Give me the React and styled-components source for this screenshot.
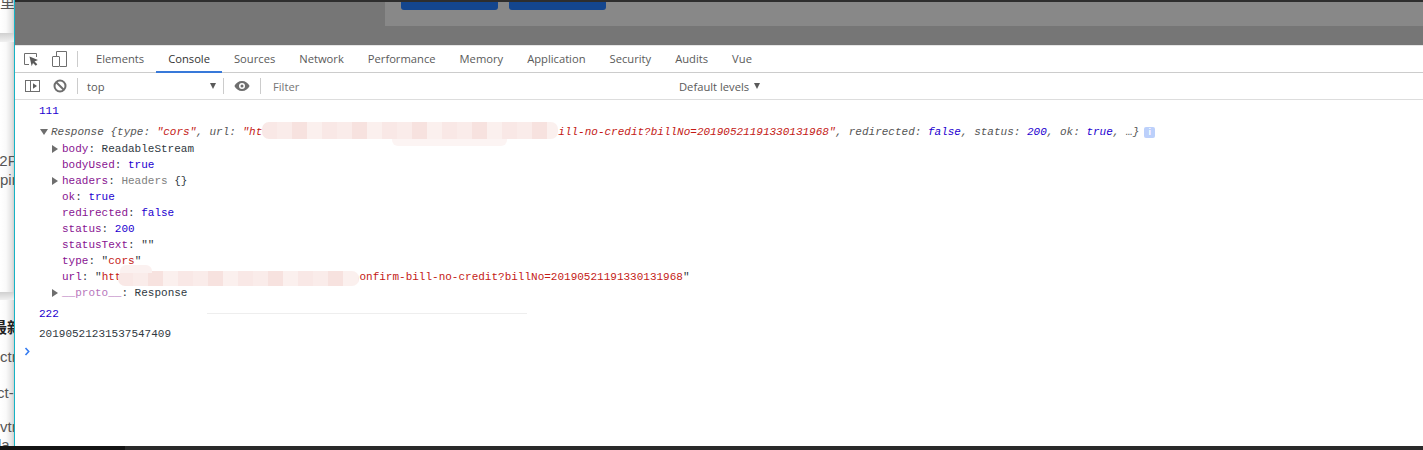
import React from 'react';
import styled, { createGlobalStyle } from 'styled-components';

const TABS = ['Elements', 'Console', 'Sources', 'Network', 'Performance', 'Memory', 'Application', 'Security', 'Audits', 'Vue'];

const App = () => (
  <Page>
    <GlobalStyle />
    <Backdrop>
      <BackdropText $top={-7} $left={0}>里.</BackdropText>
      <BackdropBand $top={33} $height={9} />
      <BackdropText $top={151} $left={-4}>l2P</BackdropText>
      <BackdropText $top={170} $left={0}>pir</BackdropText>
      <BackdropBand $top={292} $height={8} />
      <BackdropText $top={318} $left={-8} $bold>最新</BackdropText>
      <BackdropText $top={347} $left={0}>ctr</BackdropText>
      <BackdropText $top={383} $left={-3}>ct-</BackdropText>
      <BackdropText $top={417} $left={0}>vtr</BackdropText>
      <BackdropText $top={435} $left={-2}>la</BackdropText>
    </Backdrop>
    <Main>
      <Overlay>
        <OverlayCard>
          <BlueButton />
          <BlueButton />
        </OverlayCard>
      </Overlay>
      <TabBar>
        <IconButton>
          <svg width="20" height="18" viewBox="0 0 20 18" fill="none">
            <path d="M6 14.5H1.500V3.500H13.500V7" stroke="#6e6e6e" strokeWidth="1" />
            <path d="M6.500 6.500l8.500 3.500-3.500 1.400 2.800 2.800-1.500 1.500-2.800-2.800-1.300 3.300z" fill="#5a5a5a" />
          </svg>
        </IconButton>
        <IconButton>
          <svg width="18" height="18" viewBox="0 0 18 18" fill="none" stroke="#6e6e6e">
            <path d="M5.500 6V1.500H15.500V16.500H9" />
            <rect x="1.500" y="6.500" width="7" height="10" rx="0.500" />
          </svg>
        </IconButton>
        <Separator $left={7} $right={6} />
        {TABS.map((tab) => (
          <Tab key={tab} $active={tab === 'Console'}>{tab}</Tab>
        ))}
      </TabBar>
      <FilterBar>
        <IconButton $first>
          <svg width="16" height="14" viewBox="0 0 16 14" fill="none">
            <rect x="0.500" y="1.500" width="14" height="11" stroke="#6e6e6e" />
            <path d="M5.500 1.500V12.500" stroke="#6e6e6e" />
            <path d="M8 4.200l4 2.800-4 2.800z" fill="#5a5a5a" />
          </svg>
        </IconButton>
        <IconButton>
          <svg width="16" height="16" viewBox="0 0 16 16" fill="none" stroke="#6e6e6e" strokeWidth="2">
            <circle cx="8" cy="8" r="5.500" />
            <path d="M4 4l8 8" />
          </svg>
        </IconButton>
        <Separator $left={7} $right={9} />
        <ContextSelect>
          top
          <DownCaret />
        </ContextSelect>
        <Separator $left={7} $right={1} />
        <IconButton>
          <svg width="16" height="12" viewBox="0 0 16 12">
            <path fillRule="evenodd" fill="#6e6e6e" d="M8 1c3.400 0 6.200 2.100 7.600 5-1.400 2.900-4.200 5-7.600 5S1.800 8.900.4 6C1.800 3.100 4.600 1 8 1zm0 2a3 3 0 100 6 3 3 0 000-6zm0 1.500a1.500 1.500 0 110 3 1.500 1.500 0 010-3z" />
          </svg>
        </IconButton>
        <Separator $left={8} $right={12} />
        <FilterLabel>Filter</FilterLabel>
        <LevelSelect>
          Default levels
          <DownCaret />
        </LevelSelect>
      </FilterBar>
      <Console>
        <LogRow $color="#1c00cf">111</LogRow>
        <ObjectRow>
          <Arrow $open />
          <Preview>
            <span>Response {'{'}type: </span>
            <Str>"cors"</Str>, url: <Str>"ht</Str>
            <Blur $width={296} $top={-2} $height={17} $left={0} $tail />
            <Str>ill-no-credit?billNo=20190521191330131968"</Str>, redirected: <Kw>false</Kw>, status: <Kw>200</Kw>, ok: <Kw>true</Kw>, …{'}'}
          </Preview>
          <InfoBadge>i</InfoBadge>
        </ObjectRow>
        <PropRow $arrow><Arrow /><Key>body</Key>: ReadableStream</PropRow>
        <PropRow><Key>bodyUsed</Key>: <Val>true</Val></PropRow>
        <PropRow $arrow><Arrow /><Key>headers</Key>: <Muted>Headers</Muted> {'{}'}</PropRow>
        <PropRow><Key>ok</Key>: <Val>true</Val></PropRow>
        <PropRow><Key>redirected</Key>: <Val>false</Val></PropRow>
        <PropRow><Key>status</Key>: <Val>200</Val></PropRow>
        <PropRow><Key>statusText</Key>: ""</PropRow>
        <PropRow><Key>type</Key>: "<Str>cors</Str>"</PropRow>
        <PropRow>
          <Key>url</Key>: "<Str>htt</Str>
          <Blur $width={238} $top={2} $height={15} $left={-3} $cap />
          <Str>onfirm-bill-no-credit?billNo=20190521191330131968</Str>"
        </PropRow>
        <PropRow $arrow $gap={5}><Arrow /><Proto>__proto__</Proto>: Response</PropRow>
        <LogRow $color="#1c00cf" $divider $gap={4}>222</LogRow>
        <LogRow $color="#303942" $gap={1}>20190521231537547409</LogRow>
        <Prompt>
          <svg width="8" height="9" viewBox="0 0 8 9" fill="none">
            <path d="M1.500 1l3.200 3.500-3.200 3.500" stroke="#367cf1" strokeWidth="1.600" />
          </svg>
        </Prompt>
      </Console>
    </Main>
    <Taskbar />
  </Page>
);

export default App;

const GlobalStyle = createGlobalStyle`
  html, body {
    margin: 0;
    height: 100%;
    overflow: hidden;
    background: #fff;
  }
`;

const Page = styled.div`
  position: relative;
  display: flex;
  width: 1423px;
  height: 450px;
  overflow: hidden;
  font-family: "Open Sans", "Noto Sans CJK SC", sans-serif;
`;

const Backdrop = styled.div`
  position: relative;
  flex: 0 0 14px;
  overflow: hidden;
  background: linear-gradient(90deg, #fff 0, #fafafa 6px, #e2e2e2 12px, #cfcfcf 14px);
`;

const BackdropText = styled.span`
  position: absolute;
  top: ${({ $top }) => $top}px;
  left: ${({ $left }) => $left}px;
  font-family: "Liberation Sans", "Noto Sans CJK SC", sans-serif;
  font-size: 15px;
  line-height: 20px;
  white-space: nowrap;
  color: ${({ $bold }) => ($bold ? '#222' : '#555')};
  font-weight: ${({ $bold }) => ($bold ? 700 : 400)};
`;

const BackdropBand = styled.div`
  position: absolute;
  top: ${({ $top }) => $top}px;
  left: 0;
  width: 100%;
  height: ${({ $height }) => $height}px;
  background: linear-gradient(#d0d0d0, #f0f0f0);
`;

const Main = styled.div`
  flex: 1;
  display: flex;
  flex-direction: column;
  border-left: 1px solid #16b3c4;
`;

const Overlay = styled.div`
  flex: 0 0 45px;
  padding-left: 370px;
  background: #767676;
  border-top: 2px solid #2e2e2e;
  box-sizing: border-box;
`;

const OverlayCard = styled.div`
  display: flex;
  gap: 11px;
  height: 24px;
  padding-left: 16px;
  background: #888;
`;

const BlueButton = styled.div`
  width: 97px;
  height: 8px;
  border-radius: 0 0 3px 3px;
  background: #14468e;
`;

const TabBar = styled.div`
  display: flex;
  align-items: center;
  flex: 0 0 28px;
  padding-left: 8px;
  border-top: 1px solid #e6e6e6;
  border-bottom: 1px solid #ccc;
  background: #fff;
  box-sizing: border-box;
`;

const IconButton = styled.div`
  display: flex;
  align-items: center;
  justify-content: center;
  width: 20px;
  margin-left: ${({ $first }) => ($first ? '-1px' : '7px')};
  &:first-child {
    margin-left: 0;
  }
`;

const Separator = styled.div`
  width: 1px;
  height: 16px;
  margin: 0 ${({ $right }) => $right}px 0 ${({ $left }) => $left}px;
  background: #ccc;
`;

const Tab = styled.div`
  display: flex;
  align-items: center;
  height: 100%;
  padding: 0 12px;
  box-sizing: border-box;
  font-size: 11.2px;
  color: ${({ $active }) => ($active ? '#333' : '#5a5a5a')};
  border-bottom: 2px solid ${({ $active }) => ($active ? '#3879d9' : 'transparent')};
  margin-bottom: -1px;
`;

const FilterBar = styled.div`
  position: relative;
  display: flex;
  align-items: center;
  flex: 0 0 27px;
  padding-left: 8px;
  border-bottom: 1px solid #ddd;
  font-size: 11.2px;
  color: #5a5a5a;
  box-sizing: border-box;
`;

const ContextSelect = styled.div`
  display: flex;
  align-items: center;
  justify-content: space-between;
  width: 129px;
`;

const FilterLabel = styled.div`
  color: #757575;
`;

const LevelSelect = styled.div`
  position: absolute;
  left: 664px;
  display: flex;
  align-items: center;
  gap: 5px;
`;

const DownCaret = styled.i`
  width: 0;
  height: 0;
  border-left: 3.5px solid transparent;
  border-right: 3.5px solid transparent;
  border-top: 6px solid #5a5a5a;
`;

const Console = styled.div`
  flex: 1;
  padding: 3px 0 0 24px;
  font-family: "Liberation Mono", monospace;
  font-size: 11px;
  line-height: 16px;
  color: #303942;
  white-space: pre;
`;

const LogRow = styled.div`
  position: relative;
  height: 16px;
  margin-bottom: ${({ $gap }) => $gap ?? 5}px;
  color: ${({ $color }) => $color};
  ${({ $divider }) => $divider && `
    &::after {
      content: '';
      position: absolute;
      top: 7px;
      left: 168px;
      width: 320px;
      height: 1px;
      background: #eee;
    }
  `}
`;

const ObjectRow = styled.div`
  display: flex;
  align-items: center;
  height: 16px;
  margin-bottom: 1px;
`;

const Preview = styled.div`
  display: flex;
  font-style: italic;
  color: #555;
`;

const Str = styled.span`
  color: #c41a16;
`;

const Kw = styled.span`
  color: #1c00cf;
`;

const Key = styled.span`
  color: #881391;
`;

const Proto = styled(Key)`
  opacity: 0.6;
`;

const Val = styled.span`
  color: #1c00cf;
`;

const Muted = styled.span`
  color: #808080;
`;

const Blur = styled.span`
  position: relative;
  flex: none;
  display: inline-block;
  width: ${({ $width }) => $width}px;
  height: 16px;
  vertical-align: top;

  &::before {
    content: '';
    position: absolute;
    top: ${({ $top }) => $top}px;
    left: ${({ $left }) => $left}px;
    right: 0;
    height: ${({ $height }) => $height}px;
    border-radius: 7px;
    background: repeating-linear-gradient(90deg, #f9e8e6 0 15px, #faecea 15px 30px, #f7e2df 30px 45px, #fbf0ee 45px 60px);
  }

  ${({ $tail }) => $tail && `
    &::after {
      content: '';
      position: absolute;
      top: 15px;
      left: 130px;
      width: 115px;
      height: 7px;
      border-radius: 0 0 6px 6px;
      background: #fcf4f3;
    }
  `}

  ${({ $cap }) => $cap && `
    &::after {
      content: '';
      position: absolute;
      top: -4px;
      left: -1px;
      width: 32px;
      height: 8px;
      border-radius: 6px 6px 0 0;
      background: #fbf1f0;
    }
  `}
`;

const Arrow = styled.i`
  display: inline-block;
  flex: none;
  width: 0;
  height: 0;
  ${({ $open }) => $open
    ? `border-left: 4px solid transparent; border-right: 4px solid transparent; border-top: 6px solid #6e6e6e; margin: 0 3px 0 1px;`
    : `border-top: 4px solid transparent; border-bottom: 4px solid transparent; border-left: 6px solid #6e6e6e; margin-right: 4px; vertical-align: -1px;`}
`;

const InfoBadge = styled.span`
  display: flex;
  align-items: center;
  justify-content: center;
  width: 11px;
  height: 11px;
  margin-left: 5px;
  border-radius: 2px;
  background: #bcd0fb;
  color: #fff;
  font: 700 9px "Liberation Sans", sans-serif;
`;

const PropRow = styled.div`
  height: 16px;
  padding-left: ${({ $arrow }) => ($arrow ? '13px' : '23px')};
  margin-bottom: ${({ $gap }) => $gap ?? 0}px;
`;

const Prompt = styled.div`
  display: flex;
  align-items: center;
  height: 16px;
  margin-left: -15px;
`;

const Taskbar = styled.div`
  position: absolute;
  left: 0;
  right: 0;
  bottom: 0;
  height: 4px;
  background: linear-gradient(90deg, #141414 0 125px, #2a2a2a 125px);
`;
